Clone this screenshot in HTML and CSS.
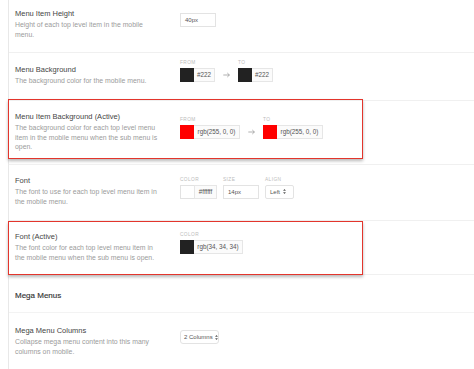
FILE: index.html
```html
<!DOCTYPE html>
<html>
<head>
<meta charset="utf-8">
<link rel="stylesheet" href="styles.css">
</head>
<body>
<div class="panel">
  <div class="row first">
    <div class="info">
      <div class="title">Menu Item Height</div>
      <div class="desc">Height of each top level item in the mobile menu.</div>
    </div>
    <div class="control">
      <div class="field"><div class="input w36">40px</div></div>
    </div>
  </div>

  <div class="row r2">
    <div class="info">
      <div class="title">Menu Background</div>
      <div class="desc">The background color for the mobile menu.</div>
    </div>
    <div class="control">
      <div class="field">
        <div class="label">From</div>
        <div class="color"><span class="swatch dark"></span><span class="hex w21">#222</span></div>
      </div>
      <div class="arrow"><svg viewBox="0 0 7 6" width="7" height="6"><path d="M0.3 3H6.4M4.3 1L6.4 3L4.3 5" fill="none" stroke="#8f8f8f" stroke-width="0.7"/></svg></div>
      <div class="field">
        <div class="label">To</div>
        <div class="color"><span class="swatch dark"></span><span class="hex w21">#222</span></div>
      </div>
    </div>
  </div>

  <div class="row r3 flagged">
    <div class="info">
      <div class="title">Menu Item Background (Active)</div>
      <div class="desc">The background color for each top level menu item in the mobile menu when the sub menu is open.</div>
    </div>
    <div class="control">
      <div class="field">
        <div class="label">From</div>
        <div class="color"><span class="swatch red"></span><span class="hex w46">rgb(255, 0, 0)</span></div>
      </div>
      <div class="arrow"><svg viewBox="0 0 7 6" width="7" height="6"><path d="M0.3 3H6.4M4.3 1L6.4 3L4.3 5" fill="none" stroke="#8f8f8f" stroke-width="0.7"/></svg></div>
      <div class="field">
        <div class="label">To</div>
        <div class="color"><span class="swatch red"></span><span class="hex w46">rgb(255, 0, 0)</span></div>
      </div>
    </div>
    <span class="flag flag-a"></span>
  </div>

  <div class="row r4">
    <div class="info">
      <div class="title">Font</div>
      <div class="desc">The font to use for each top level menu item in the mobile menu.</div>
    </div>
    <div class="control gap6">
      <div class="field">
        <div class="label">Color</div>
        <div class="color"><span class="swatch white"></span><span class="hex w23">#ffffff</span></div>
      </div>
      <div class="field">
        <div class="label">Size</div>
        <div class="input w36">14px</div>
      </div>
      <div class="field">
        <div class="label">Align</div>
        <div class="select w29">Left <svg class="updown" viewBox="0 0 4 7" width="3" height="5"><path d="M2 0L4 2.6H0Z M2 7L4 4.4H0Z" fill="#555"/></svg></div>
      </div>
    </div>
  </div>

  <div class="row r5 flagged">
    <div class="info">
      <div class="title">Font (Active)</div>
      <div class="desc">The font color for each top level menu item in the mobile menu when the sub menu is open.</div>
    </div>
    <div class="control">
      <div class="field">
        <div class="label">Color</div>
        <div class="color"><span class="swatch dark"></span><span class="hex w49">rgb(34, 34, 34)</span></div>
      </div>
    </div>
    <span class="flag flag-b"></span>
  </div>

  <div class="row heading">
    <div class="section">Mega Menus</div>
  </div>

  <div class="row r7">
    <div class="info">
      <div class="title">Mega Menu Columns</div>
      <div class="desc">Collapse mega menu content into this many columns on mobile.</div>
    </div>
    <div class="control">
      <div class="field"><div class="select rounded w39">2 Columns <svg class="updown" viewBox="0 0 4 7" width="3" height="5"><path d="M2 0L4 2.6H0Z M2 7L4 4.4H0Z" fill="#555"/></svg></div></div>
    </div>
  </div>
</div>
</body>
</html>
```

FILE: styles.css
```css
* { box-sizing: border-box; }
html, body { margin: 0; padding: 0; background: #fff; }
body {
  font-family: "Liberation Sans", Arial, sans-serif;
  color: #444;
  width: 474px;
  height: 369px;
  overflow: hidden;
}
.panel {
  margin-left: 8px;
  border-left: 1px solid #e8e8e8;
  min-height: 369px;
}
.row {
  position: relative;
  display: flex;
  align-items: center;
  padding: 10px 0 12px 6px;
  border-bottom: 1px solid #f0f0f0;
}
.row.first { padding-top: 7px; height: 53px; }
.row.r2 { height: 48px; padding-top: 8px; }
.row.r3 { height: 64px; }
.row.r4 { height: 56px; padding-top: 9px; }
.row.r5 { height: 54px; }
.row.heading { height: 38px; padding: 4px 0 0 6px; border-bottom-color: #f3f3f3; }
.row.r7 { border-bottom: none; padding-top: 11px; height: 56px; }
.info { width: 165px; flex: none; }
.title {
  font-size: 7.5px;
  line-height: 11px;
  color: #454545;
  margin-bottom: 1px;
}
.desc {
  font-size: 6.9px;
  line-height: 9.7px;
  color: #9b9b9b;
  width: 146px;
}
.section {
  font-size: 8px;
  color: #333;
  -webkit-text-stroke: 0.15px #333;
}
.control {
  display: flex;
  align-items: flex-end;
  margin-bottom: 7px;
}
.control.gap6 { gap: 6px; }
.field { display: flex; flex-direction: column; }
.label {
  font-size: 4.8px;
  letter-spacing: 0.4px;
  text-transform: uppercase;
  color: #bcbcbc;
  line-height: 5px;
  margin-bottom: 3px;
}
.color { display: flex; height: 14px; }
.swatch { width: 14px; height: 14px; flex: none; }
.swatch.dark { background: #222; }
.swatch.red { background: #ff0000; }
.swatch.white { background: #fff; border: 1px solid #e2e2e2; border-right: none; }
.hex {
  height: 14px;
  border: 1px solid #e6e6e6;
  border-left: none;
  background: #fbfbfb;
  font-size: 6.3px;
  line-height: 12px;
  color: #555;
  text-align: center;
  white-space: nowrap;
}
.w21 { width: 21px; }
.w23 { width: 23px; }
.w29 { width: 29px; }
.w36 { width: 36px; }
.w39 { width: 39px; }
.w46 { width: 46px; }
.w49 { width: 49px; }
.r4 .hex { border-left: 1px solid #e6e6e6; }
.input {
  height: 14px;
  border: 1px solid #e3e3e3;
  background: #fff;
  font-size: 6px;
  line-height: 12px;
  color: #555;
  padding-left: 4px;
}
.select {
  height: 14px;
  border: 1px solid #e3e3e3;
  border-radius: 2px;
  background: #fff;
  font-size: 6px;
  line-height: 12px;
  color: #555;
  padding-left: 4px;
  display: flex;
  align-items: center;
  gap: 3px;
  white-space: nowrap;
}
.select.rounded { border-radius: 3px; padding-left: 3px; gap: 2px; }
.updown { display: block; flex: none; }
.arrow {
  height: 14px;
  display: flex;
  align-items: center;
  padding: 0 8px 0 8px;
}
.arrow svg { display: block; }
.flag {
  position: absolute;
  left: -1px;
  width: 355px;
  border: 1.5px solid #e3352c;
  box-shadow: 0 2px 3px rgba(0,0,0,0.28);
  pointer-events: none;
}
.flag-a { top: -2px; height: 60px; }
.flag-b { top: 0; height: 54px; }
```
